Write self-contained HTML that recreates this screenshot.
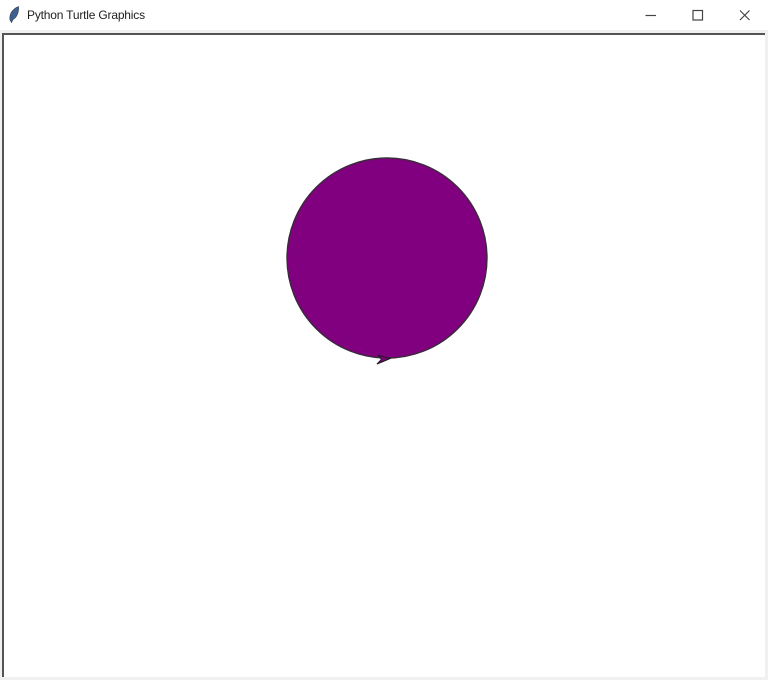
<!DOCTYPE html>
<html>
<head>
<meta charset="utf-8">
<style>
html,body{margin:0;padding:0;width:768px;height:680px;overflow:hidden;background:#fff}
#frame{position:absolute;left:0;top:30px;width:768px;height:650px;background:#f0f0f0}
#canvas{position:absolute;left:2px;top:33px;width:763px;height:644px;background:#fff;border-top:2px solid #555;border-left:2px solid #555;box-sizing:border-box}
#title{position:absolute;left:27px;top:8px;font:12px/15px "Liberation Sans",sans-serif;color:#222;white-space:nowrap;letter-spacing:-.19px}
svg{position:absolute;left:0;top:0}
</style>
</head>
<body>
<div id="frame"></div>
<div id="canvas"></div>
<div id="title">Python Turtle Graphics</div>
<svg width="768" height="680" viewBox="0 0 768 680">
  <path d="M10 20C9 14 12.500 9 18.500 6.500C19 12 17 17.500 13 19.500L11.500 22.500Z" fill="#3f5f8c" stroke="#2c3a4e" stroke-width=".6"/>
  <path d="M645.500 15.500H656" stroke="#444" stroke-width="1.200" fill="none"/>
  <rect x="693" y="10.500" width="9.500" height="9.500" stroke="#444" stroke-width="1.200" fill="none"/>
  <path d="M740 10.500L749.500 20M749.500 10.500L740 20" stroke="#444" stroke-width="1.200" fill="none"/>
  <circle cx="387" cy="258" r="100" fill="#800080" stroke="#3a2a3a" stroke-width="1.400"/>
  <path d="M377 364L381.500 359.500L378.500 355.500L390 358.500Z" fill="#800080" stroke="#2a1a2a" stroke-width="1.200"/>
</svg>
</body>
</html>
